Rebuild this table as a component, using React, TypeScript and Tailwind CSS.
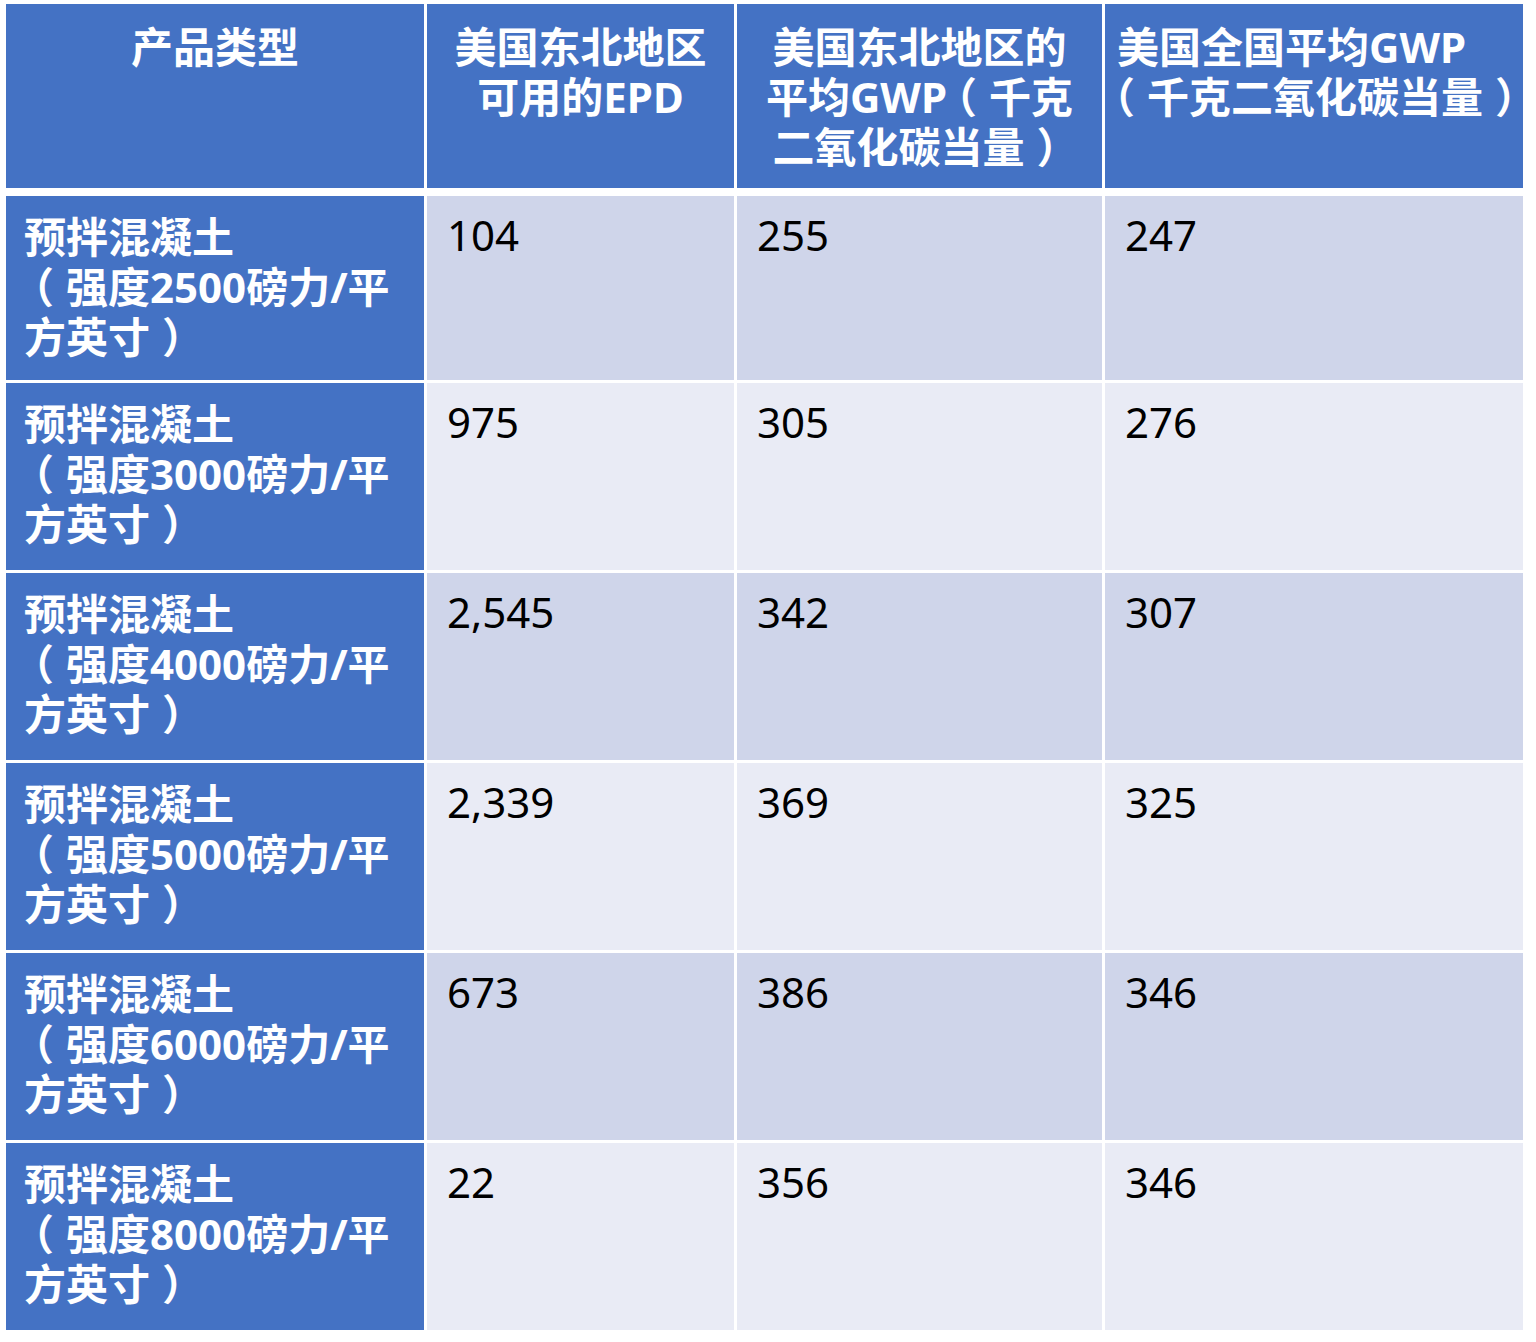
import React from "react";

const font = { fontFamily: '"Noto Sans", "Noto Sans CJK SC", sans-serif' };

// full-width brackets drawn centred in their box, as the slide font does
const L = () => <span className="inline-block -translate-x-[12px]">（</span>;
const R = () => <span className="inline-block translate-x-[12px]">）</span>;

type Line = { text: React.ReactNode; left?: boolean };

const headers: Line[][] = [
  [{ text: "产品类型" }],
  [{ text: "美国东北地区" }, { text: "可用的EPD" }],
  [
    { text: "美国东北地区的" },
    {
      text: (
        <>
          平均GWP<L />千克
        </>
      ),
    },
    {
      text: (
        <>
          二氧化碳当量<R />
        </>
      ),
    },
  ],
  [
    { text: "美国全国平均GWP", left: true },
    {
      text: (
        <>
          <L />千克二氧化碳当量<R />
        </>
      ),
    },
  ],
];

const rows = [
  { psi: "2500", epd: "104", ne: "255", us: "247" },
  { psi: "3000", epd: "975", ne: "305", us: "276" },
  { psi: "4000", epd: "2,545", ne: "342", us: "307" },
  { psi: "5000", epd: "2,339", ne: "369", us: "325" },
  { psi: "6000", epd: "673", ne: "386", us: "346" },
  { psi: "8000", epd: "22", ne: "356", us: "346" },
];

const cols = "grid grid-cols-[418px_307px_365px_418px] gap-x-[3px]";

const App = () => {
  return (
    <div className="min-h-[1342px] w-[1536px] bg-white pl-[6px] pt-[4px]" style={font}>
      {/* header */}
      <div className={`${cols} mb-[8px]`}>
        {headers.map((lines, i) => (
          <div
            key={i}
            className="h-[184px] bg-[#4472C4] pt-[18px] text-center text-[42px] font-bold leading-[50px] text-white"
          >
            {lines.map((l, j) => (
              <div
                key={j}
                className={`whitespace-nowrap ${l.left ? "pl-[12px] text-left" : ""}`}
              >
                {l.text}
              </div>
            ))}
          </div>
        ))}
      </div>

      <div className="flex flex-col gap-y-[3px]">
        {rows.map((r, i) => {
          const bg = i % 2 === 0 ? "bg-[#CFD5EA]" : "bg-[#E9EBF5]";
          const h = i === 0 ? "h-[184px]" : "h-[187px]";
          return (
            <div key={i} className={cols}>
              <div
                className={`${h} bg-[#4472C4] pl-[18px] pt-[16px] text-[42px] font-bold leading-[50px] text-white`}
              >
                <div className="whitespace-nowrap">预拌混凝土</div>
                <div className="whitespace-nowrap">
                  <L />强度{r.psi}磅力/平
                </div>
                <div className="whitespace-nowrap">
                  方英寸<R />
                </div>
              </div>
              {[r.epd, r.ne, r.us].map((v, j) => (
                <div
                  key={j}
                  className={`${h} ${bg} pl-[20px] pt-[14px] text-[42px] leading-[50px] text-black`}
                >
                  {v}
                </div>
              ))}
            </div>
          );
        })}
      </div>
    </div>
  );
};

export default App;
